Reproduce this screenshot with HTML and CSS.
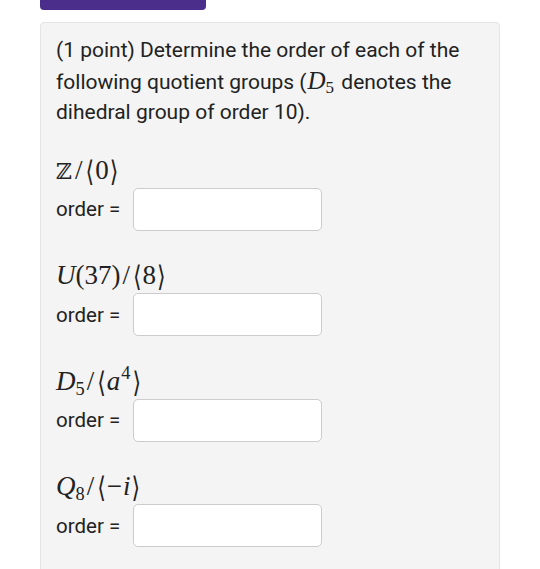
FILE: index.html
```html
<!DOCTYPE html>
<html>
<head>
<meta charset="utf-8">
<link rel="stylesheet" href="styles.css">
</head>
<body>
<div class="wrap">
  <div class="tab"></div>
  <div class="card">
    <p class="prompt">(1 point) Determine the order of each of the following quotient groups (<span class="m"><i>D</i><sub>5</sub></span> denotes the dihedral group of order 10).</p>

    <div class="item first">
      <div class="math"><span class="bb">ℤ</span><span class="sl">/</span><span class="ang">⟨</span>0<span class="ang">⟩</span></div>
      <div class="row"><span class="lbl">order =</span><input class="ans" type="text"></div>
    </div>
    <div class="item">
      <div class="math"><i>U</i>(37)<span class="sl">/</span><span class="ang">⟨</span>8<span class="ang">⟩</span></div>
      <div class="row"><span class="lbl">order =</span><input class="ans" type="text"></div>
    </div>
    <div class="item">
      <div class="math"><i>D</i><sub>5</sub><span class="sl">/</span><span class="ang">⟨</span><i>a</i><sup>4</sup><span class="ang">⟩</span></div>
      <div class="row"><span class="lbl">order =</span><input class="ans" type="text"></div>
    </div>
    <div class="item">
      <div class="math"><i>Q</i><sub>8</sub><span class="sl">/</span><span class="ang">⟨</span>−<i class="ii">i</i><span class="ang">⟩</span></div>
      <div class="row"><span class="lbl">order =</span><input class="ans" type="text"></div>
    </div>
  </div>
</div>
</body>
</html>
```
FILE: styles.css
```css
html, body {
  margin: 0;
  padding: 0;
  background: #ffffff;
}
body {
  font-family: Roboto, "Liberation Sans", sans-serif;
  color: #222222;
}
.wrap {
  margin-left: 40px;
  width: 460px;
}
.tab {
  width: 166px;
  height: 10px;
  background: #4b2d8b;
  border-radius: 0 0 4px 4px;
}
.card {
  margin-top: 12px;
  background: #f4f4f4;
  border: 1px solid #e4e4e4;
  border-radius: 4px;
  padding: 12px 15px 40px 15px;
  min-height: 560px;
}
.prompt {
  margin: 0;
  font-size: 21px;
  line-height: 30.5px;
}
.m {
  font-family: "Liberation Serif", "DejaVu Serif", serif;
  font-size: 25px;
  margin-left: 1px;
}
.m sub {
  margin-right: 2px;
}
.m sub, .math sub {
  font-style: normal;
  font-size: 0.68em;
  vertical-align: -0.25em;
  line-height: 0;
}
.math sup {
  font-size: 0.68em;
  vertical-align: 0.55em;
  line-height: 0;
  margin-left: 1px;
  margin-right: 1px;
}
.item {
  margin-top: 29.5px;
}
.item.first {
  margin-top: 27px;
}
.math {
  font-family: "Liberation Serif", "DejaVu Serif", serif;
  font-size: 27px;
  line-height: 30px;
  height: 30px;
}
.bb {
  font-family: "DejaVu Serif", "DejaVu Sans", serif;
  font-size: 22px;
  margin-right: 1px;
}
.sl {
  margin: 0 2px 0 2px;
}
.ang {
  display: inline-block;
  font-family: "DejaVu Serif", serif;
  font-weight: 400;
  font-size: 22px;
  transform: scaleY(1.3);
  margin: 0 1px;
}
.ii {
  margin-left: 1px;
}
.row {
  display: flex;
  align-items: center;
  gap: 12px;
  margin-top: 3px;
}
.lbl {
  font-size: 20.5px;
  width: 65px;
}
.ans {
  width: 189px;
  height: 43px;
  box-sizing: border-box;
  border: 1px solid #cccccc;
  border-radius: 5px;
  background: #ffffff;
  margin: 0;
  padding: 0 6px;
}
```
